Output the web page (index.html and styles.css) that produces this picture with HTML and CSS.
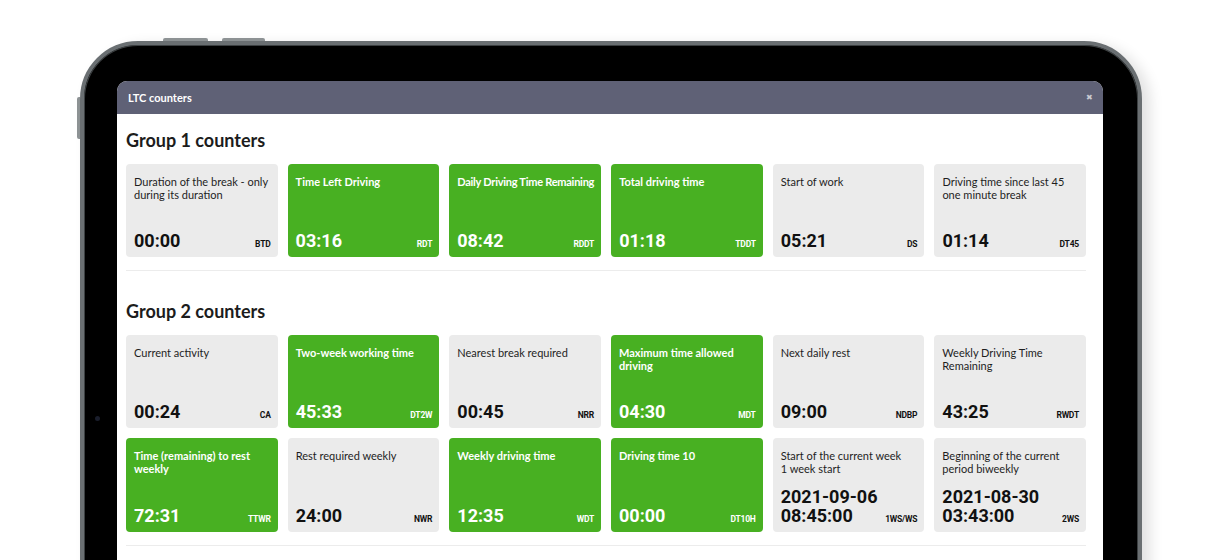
FILE: index.html
```html
<!DOCTYPE html>
<html lang="en">
<head>
  <meta charset="UTF-8">
  <meta name="viewport" content="width=device-width, initial-scale=1.0">
  <title>LTC counters</title>
  <link rel="stylesheet" href="styles.css">
</head>
<body>
  <div class="tablet">
    <span class="tablet-key tablet-key--a"></span>
    <span class="tablet-key tablet-key--b"></span>
    <span class="tablet-key tablet-key--side"></span>
    <span class="tablet-camera"></span>

    <div class="modal">
      <div class="modal-header">
        <span class="modal-title">LTC counters</span>
        <button class="modal-close">&#x2716;</button>
      </div>

      <div class="modal-body">
        <section class="group">
          <h2>Group 1 counters</h2>
          <div class="counter-grid">
            <div class="counter">
              <div class="counter-label">Duration of the break - only during its duration</div>
              <div class="counter-foot"><span class="counter-value">00:00</span><span class="counter-code">BTD</span></div>
            </div>
            <div class="counter counter--on">
              <div class="counter-label">Time Left Driving</div>
              <div class="counter-foot"><span class="counter-value">03:16</span><span class="counter-code">RDT</span></div>
            </div>
            <div class="counter counter--on">
              <div class="counter-label counter-label--long">Daily Driving Time Remaining</div>
              <div class="counter-foot"><span class="counter-value">08:42</span><span class="counter-code">RDDT</span></div>
            </div>
            <div class="counter counter--on">
              <div class="counter-label">Total driving time</div>
              <div class="counter-foot"><span class="counter-value">01:18</span><span class="counter-code">TDDT</span></div>
            </div>
            <div class="counter">
              <div class="counter-label">Start of work</div>
              <div class="counter-foot"><span class="counter-value">05:21</span><span class="counter-code">DS</span></div>
            </div>
            <div class="counter">
              <div class="counter-label">Driving time since last 45 one minute break</div>
              <div class="counter-foot"><span class="counter-value">01:14</span><span class="counter-code">DT45</span></div>
            </div>
          </div>
        </section>

        <section class="group">
          <h2>Group 2 counters</h2>
          <div class="counter-grid">
            <div class="counter">
              <div class="counter-label">Current activity</div>
              <div class="counter-foot"><span class="counter-value">00:24</span><span class="counter-code">CA</span></div>
            </div>
            <div class="counter counter--on">
              <div class="counter-label">Two-week working time</div>
              <div class="counter-foot"><span class="counter-value">45:33</span><span class="counter-code">DT2W</span></div>
            </div>
            <div class="counter">
              <div class="counter-label">Nearest break required</div>
              <div class="counter-foot"><span class="counter-value">00:45</span><span class="counter-code">NRR</span></div>
            </div>
            <div class="counter counter--on">
              <div class="counter-label">Maximum time allowed driving</div>
              <div class="counter-foot"><span class="counter-value">04:30</span><span class="counter-code">MDT</span></div>
            </div>
            <div class="counter">
              <div class="counter-label">Next daily rest</div>
              <div class="counter-foot"><span class="counter-value">09:00</span><span class="counter-code">NDBP</span></div>
            </div>
            <div class="counter">
              <div class="counter-label">Weekly Driving Time Remaining</div>
              <div class="counter-foot"><span class="counter-value">43:25</span><span class="counter-code">RWDT</span></div>
            </div>

            <div class="counter counter--on">
              <div class="counter-label">Time (remaining) to rest weekly</div>
              <div class="counter-foot"><span class="counter-value">72:31</span><span class="counter-code">TTWR</span></div>
            </div>
            <div class="counter">
              <div class="counter-label">Rest required weekly</div>
              <div class="counter-foot"><span class="counter-value">24:00</span><span class="counter-code">NWR</span></div>
            </div>
            <div class="counter counter--on">
              <div class="counter-label">Weekly driving time</div>
              <div class="counter-foot"><span class="counter-value">12:35</span><span class="counter-code">WDT</span></div>
            </div>
            <div class="counter counter--on">
              <div class="counter-label">Driving time 10</div>
              <div class="counter-foot"><span class="counter-value">00:00</span><span class="counter-code">DT10H</span></div>
            </div>
            <div class="counter">
              <div class="counter-label">Start of the current week<br>1 week start</div>
              <div class="counter-foot">
                <span class="counter-value counter-value--date"><span>2021-09-06</span><span>08:45:00</span></span>
                <span class="counter-code">1WS/WS</span>
              </div>
            </div>
            <div class="counter">
              <div class="counter-label">Beginning of the current period biweekly</div>
              <div class="counter-foot">
                <span class="counter-value counter-value--date"><span>2021-08-30</span><span>03:43:00</span></span>
                <span class="counter-code">2WS</span>
              </div>
            </div>
          </div>
        </section>
      </div>
    </div>
  </div>
</body>
</html>
```

FILE: styles.css
```css
/* Page */
body {
  margin: 0;
  height: 560px;
  overflow: hidden;
  background: #ffffff;
  font-family: Lato, "Open Sans", sans-serif;
  color: #222;
}

/* Tablet frame */
.tablet {
  position: relative;
  box-sizing: border-box;
  width: 1062px;
  height: 620px;
  margin: 41px 0 0 80px;
  padding: 36px 35px 0 33px;
  background: #000;
  border: 4px solid #6a6f72;
  border-radius: 58px;
  box-shadow: inset 0 0 0 1px #3c4042, 8px 4px 14px rgba(0, 0, 0, 0.12);
}

.tablet-key {
  position: absolute;
  background: #8d9294;
  border-radius: 2px 2px 0 0;
}

.tablet-key--a {
  top: -7px;
  left: 79px;
  width: 45px;
  height: 3px;
}

.tablet-key--b {
  top: -7px;
  left: 138px;
  width: 43px;
  height: 3px;
}

.tablet-key--side {
  top: 52px;
  left: -7px;
  width: 3px;
  height: 42px;
  border-radius: 2px 0 0 2px;
}

.tablet-camera {
  position: absolute;
  top: 371px;
  left: 11px;
  width: 5px;
  height: 5px;
  border-radius: 50%;
  background: #1a1e2c;
}

/* Modal */
.modal {
  height: 100%;
  background: #fff;
  border-radius: 10px 10px 0 0;
  overflow: hidden;
}

.modal-header {
  display: flex;
  align-items: center;
  justify-content: space-between;
  height: 33px;
  padding: 0 10px 0 11px;
  background: #5f6176;
  color: #fff;
}

.modal-title {
  font-size: 11px;
  font-weight: 700;
}

.modal-close {
  padding: 0;
  border: none;
  background: none;
  color: #c9cad2;
  font-size: 8px;
  cursor: pointer;
}

.modal-body {
  padding: 15px 17px 0 9px;
}

/* Groups */
.group {
  padding-bottom: 13px;
  margin-bottom: 29px;
  border-bottom: 1px solid #ececec;
}

.group h2 {
  margin: 0 0 13px;
  font-size: 18px;
  line-height: 22px;
  font-weight: 700;
  color: #1c1c1c;
}

.counter-grid {
  display: grid;
  grid-template-columns: repeat(6, 1fr);
  grid-auto-rows: minmax(93px, auto);
  gap: 10px;
}

/* Counter card */
.counter {
  display: flex;
  flex-direction: column;
  justify-content: space-between;
  padding: 11px 7px 6px 8px;
  background: #ebebeb;
  border-radius: 4px;
  color: #111;
}

.counter--on {
  background: #48b022;
  color: #fff;
}

.counter-label {
  font-size: 11px;
  line-height: 13px;
  color: #1e1e1e;
}

.counter--on .counter-label {
  color: #fff;
  font-weight: 700;
}

.counter-label--long {
  white-space: nowrap;
  letter-spacing: -0.25px;
}

.counter-foot {
  display: flex;
  align-items: flex-end;
  justify-content: space-between;
}

.counter-value {
  font-family: Roboto, sans-serif;
  font-size: 18px;
  line-height: 21px;
  font-weight: 700;
}

.counter-value--date {
  display: flex;
  flex-direction: column;
  margin-top: 12px;
  margin-bottom: 1px;
  line-height: 19px;
}

.counter-code {
  font-family: Roboto, sans-serif;
  font-size: 8.5px;
  line-height: 10px;
  font-weight: 700;
  letter-spacing: -0.2px;
  padding-bottom: 2px;
}
```
